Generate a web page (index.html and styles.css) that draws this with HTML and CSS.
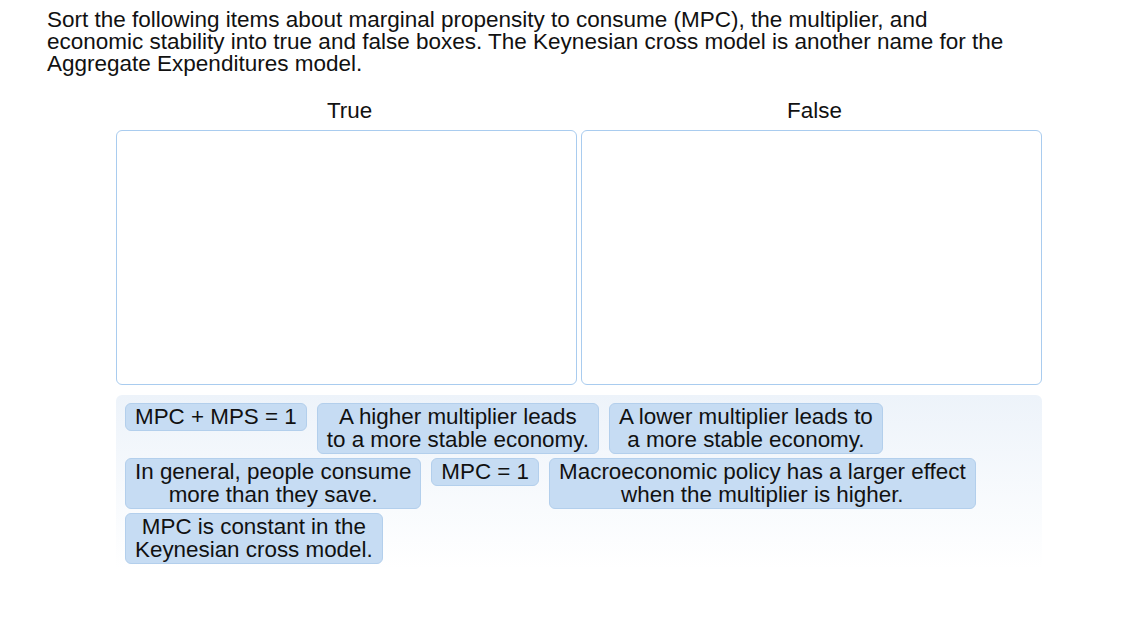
FILE: index.html
```html
<!DOCTYPE html>
<html lang="en">
<head>
  <meta charset="UTF-8" />
  <title>Sort items</title>
  <link rel="stylesheet" href="styles.css">
</head>
<body>
  <p class="prompt">
    Sort the following items about marginal propensity to consume (MPC), the multiplier, and<br>
    economic stability into true and false boxes. The Keynesian cross model is another name for the<br>
    Aggregate Expenditures model.
  </p>

  <div class="sorter">
    <div class="bins">
      <div class="bin">
        <div class="bin-title">True</div>
        <div class="bin-box"></div>
      </div>
      <div class="bin">
        <div class="bin-title">False</div>
        <div class="bin-box"></div>
      </div>
    </div>

    <div class="tray">
      <div class="chip">MPC + MPS = 1</div>
      <div class="chip">A higher multiplier leads<br>to a more stable economy.</div>
      <div class="chip">A lower multiplier leads to<br>a more stable economy.</div>
      <div class="chip">In general, people consume<br>more than they save.</div>
      <div class="chip">MPC = 1</div>
      <div class="chip">Macroeconomic policy has a larger effect<br>when the multiplier is higher.</div>
      <div class="chip">MPC is constant in the<br>Keynesian cross model.</div>
    </div>
  </div>
</body>
</html>
```

FILE: styles.css
```css
body {
  margin: 0;
  background: #fff;
  color: #111;
  font-family: "Liberation Sans", Arial, sans-serif;
}
.prompt {
  margin: 9px 0 0 47px;
  font-size: 22.5px;
  line-height: 22px;
}
.sorter {
  width: 926px;
  margin: 23px 0 0 116px;
}
.bins {
  display: grid;
  grid-template-columns: 1fr 1fr;
  gap: 4px;
}
.bin-title {
  padding-left: 6px;
  text-align: center;
  font-size: 22.4px;
  line-height: 26px;
  margin-bottom: 6px;
}
.bin-box {
  height: 253px;
  border: 1px solid #a9ccef;
  border-radius: 6px;
}
.tray {
  display: flex;
  flex-wrap: wrap;
  align-items: flex-start;
  gap: 4px 10px;
  margin-top: 10px;
  padding: 8px 9px 12px;
  border-radius: 6px;
  background: linear-gradient(#edf3fa, #fff 96%);
}
.chip {
  padding: 1px 9px 2px;
  font-size: 22.4px;
  line-height: 23px;
  text-align: center;
  background: #c6dcf3;
  border: 1px solid #b3cfec;
  border-radius: 6px;
}
```
